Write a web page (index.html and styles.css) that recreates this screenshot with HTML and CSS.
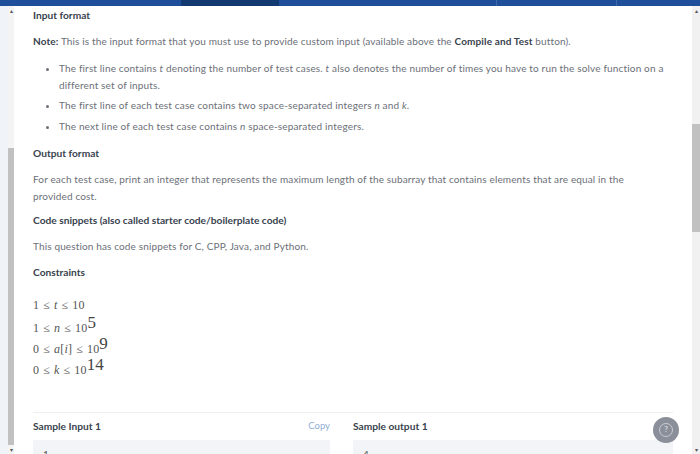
FILE: index.html
```html
<!DOCTYPE html>
<html lang="en">
<head>
<meta charset="utf-8">
<title>Problem</title>
<link rel="stylesheet" href="styles.css">
</head>
<body>
<header class="topbar">
  <div class="tab tab-first"></div>
  <div class="tab tab-active"></div>
  <div class="tab tab-mid"></div>
  <div class="tab tab-next"></div>
  <div class="tab tab-last"></div>
</header>
<div class="frame">
  <aside class="sidebar">
    <div class="scroll scroll-left">
      <span class="arrow">&#9652;</span>
      <div class="thumb-gap-left"></div>
      <div class="thumb thumb-left"></div>
      <span class="arrow">&#9662;</span>
    </div>
  </aside>
  <main class="content">
    <h3 class="head head-first">Input format</h3>
    <p class="para"><b>Note:</b> This is the input format that you must use to provide custom input (available above the <b>Compile and Test</b> button).</p>
    <ul class="list">
      <li>The first line contains <i>t</i> denoting the number of test cases. <i>t</i> also denotes the number of times you have to run the solve function on a different set of inputs.</li>
      <li>The first line of each test case contains two space-separated integers <i>n</i> and <i>k</i>.</li>
      <li>The next line of each test case contains <i>n</i> space-separated integers.</li>
    </ul>
    <h3 class="head head-output">Output format</h3>
    <p class="para para-output">For each test case, print an integer that represents the maximum length of the subarray that contains elements that are equal in the provided cost.</p>
    <h3 class="head head-code">Code snippets (also called starter code/boilerplate code)</h3>
    <p class="para para-code">This question has code snippets for C, CPP, Java, and Python.</p>
    <h3 class="head head-con">Constraints</h3>
    <div class="math">
      <div class="mline">1 ≤ <i>t</i> ≤ 10</div>
      <div class="mline">1 ≤ <i>n</i> ≤ 10<span class="sup">5</span></div>
      <div class="mline">0 ≤ <i>a</i>[<i>i</i>] ≤ 10<span class="sup">9</span></div>
      <div class="mline">0 ≤ <i>k</i> ≤ 10<span class="sup">14</span></div>
    </div>
    <section class="samples">
      <div class="sample sample-in">
        <div class="sample-head"><span class="sample-title">Sample Input 1</span><span class="copy">Copy</span></div>
        <pre class="code">1</pre>
      </div>
      <div class="sample sample-out">
        <div class="sample-head"><span class="sample-title">Sample output 1</span></div>
        <pre class="code">4</pre>
      </div>
    </section>
  </main>
  <div class="scroll scroll-right">
    <span class="arrow">&#9652;</span>
    <div class="thumb-gap-right"></div>
    <div class="thumb thumb-right"></div>
    <div class="spacer"></div>
    <span class="arrow">&#9662;</span>
  </div>
</div>
<button class="help" aria-label="Help"><span class="help-ring">?</span></button>
</body>
</html>
```
FILE: styles.css
```css
* { box-sizing: border-box; }
html, body { margin: 0; height: 100%; overflow: hidden; }
body { width: 700px; height: 454px; background: #fff; font-family: "Lato", "Liberation Sans", sans-serif; font-size: 10px; color: #6b6f78; position: relative; }
.topbar { height: 6px; display: flex; background: #1f4f9b; }
.tab { height: 6px; }
.tab-first { width: 181px; }
.tab-active { width: 98px; background: #123a70; }
.tab-mid { width: 218px; border-right: 1px solid #3f6aac; }
.tab-next { width: 120px; border-right: 1px solid #3f6aac; }
.tab-last { flex: 1; }
.frame { display: flex; height: 448px; overflow: hidden; }
.sidebar { width: 14px; flex: none; background: #f0f3f7; display: flex; justify-content: flex-end; }
.scroll { flex: none; display: flex; flex-direction: column; align-items: center; }
.scroll-left { width: 6px; background: #f4f4f4; }
.scroll-right { width: 8px; background: #f1f1f1; }
.arrow { height: 9px; font-size: 6px; line-height: 9px; color: #555; flex: none; }
.thumb { width: 100%; background: #c1c1c1; flex: none; }
.thumb-gap-left { height: 133px; flex: none; }
.thumb-left { height: 297px; }
.thumb-gap-right { height: 109px; flex: none; }
.thumb-right { height: 108px; }
.spacer { flex: 1; }
.content { flex: 1; min-width: 0; padding: 0 19px; }
.head { margin: 0; font-size: 10.2px; font-weight: 700; color: #39424e; line-height: 18px; }
.para { margin: 0; padding-right: 6px; line-height: 17px; letter-spacing: .14px; }
.para b { color: #39424e; font-weight: 700; }
.head-first + .para { margin-top: 8.5px; }
.list { margin: 10px 0 0; padding: 0 4px 0 26px; line-height: 17px; letter-spacing: .16px; }
.list li { margin-bottom: 3.5px; }
.head-output { margin-top: 9px; }
.para-output { margin-top: 9.5px; padding-right: 20px; }
.head-code { margin-top: 6px; }
.para-code { margin-top: 8.5px; }
.head-con { margin-top: 8.5px; }
.math { margin-top: 13.5px; font-family: "Liberation Serif", serif; font-size: 12px; color: #555; word-spacing: .8px; letter-spacing: .2px; }
.mline { height: 21px; line-height: 21px; display: flex; align-items: baseline; white-space: pre; }
.sup { font-size: 17px; color: #444; position: relative; top: -4px; letter-spacing: 0; }
.samples { margin-top: 33px; padding-top: 5.5px; border-top: 1px solid #eceef1; display: flex; gap: 23px; }
.sample-in { width: 297px; flex: none; }
.sample-out { flex: 1; }
.sample-head { display: flex; justify-content: space-between; line-height: 16px; }
.sample-title { font-size: 10.2px; font-weight: 700; color: #39424e; }
.copy { font-size: 9.5px; color: #8fb0d4; }
.code { margin: 6px 0 0; height: 40px; background: #f3f4f8; padding: 8px 10px; font-family: "Lato", sans-serif; font-size: 10px; color: #555; }
.help { position: absolute; left: 653px; top: 417px; width: 26px; height: 26px; border-radius: 50%; border: 0; background: #8a8f99; padding: 0; display: flex; align-items: center; justify-content: center; }
.help-ring { width: 14px; height: 14px; border: 1.5px solid #c9ccd2; border-radius: 50%; color: #d6d8dc; font: 700 8px/11px "Lato", sans-serif; text-align: center; }
```
